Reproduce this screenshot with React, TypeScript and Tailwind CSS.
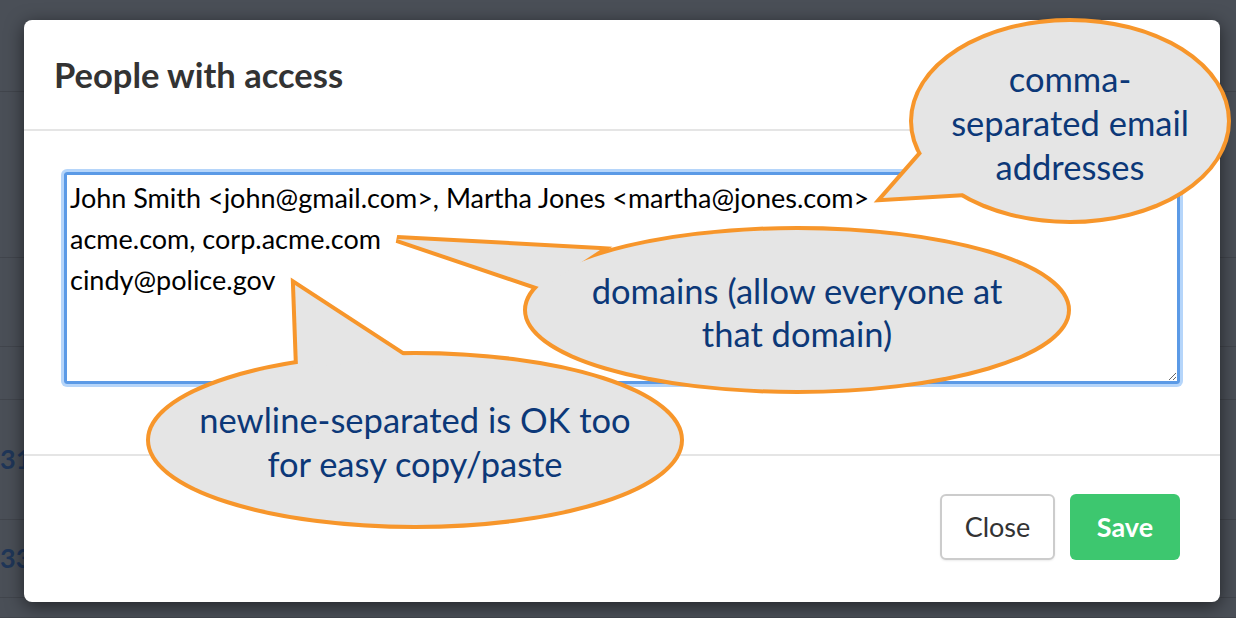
import React from 'react';

const FONT = { fontFamily: 'Lato, "Open Sans", sans-serif' };

const bgRows = [
  { h: 92, num: '' },
  { h: 166, num: '' },
  { h: 89, num: '' },
  { h: 53, num: '' },
  { h: 120, num: '31' },
  { h: 78, num: '33' },
  { h: 20, num: '' },
];

type Bubble = {
  cx: number;
  cy: number;
  rx: number;
  ry: number;
  tail: [number, number][];
  lines: string[];
  lineY: number[];
};

const bubbles: Bubble[] = [
  {
    cx: 1070,
    cy: 121,
    rx: 157,
    ry: 99,
    tail: [
      [925, 150],
      [883, 198],
      [966, 193],
    ],
    lines: ['comma-', 'separated email', 'addresses'],
    lineY: [78, 122, 166],
  },
  {
    cx: 797,
    cy: 310,
    rx: 270,
    ry: 80,
    tail: [
      [600, 250],
      [397, 239],
      [542, 288],
    ],
    lines: ['domains (allow everyone at', 'that domain)'],
    lineY: [290, 333],
  },
  {
    cx: 415,
    cy: 440,
    rx: 265,
    ry: 85,
    tail: [
      [298, 368],
      [295, 285],
      [410, 360],
    ],
    lines: ['newline-separated is OK too', 'for easy copy/paste'],
    lineY: [419, 463],
  },
];

function Callouts() {
  return (
    <svg
      className="pointer-events-none absolute left-0 top-0"
      width={1236}
      height={618}
      viewBox="0 0 1236 618"
    >
      {bubbles.map((b, i) => (
        <g key={i}>
          <ellipse cx={b.cx} cy={b.cy} rx={b.rx} ry={b.ry} fill="none" stroke="#f7962b" strokeWidth={8} />
          <polygon points={b.tail.map((p) => p.join(',')).join(' ')} fill="none" stroke="#f7962b" strokeWidth={8} strokeLinejoin="miter" />
          <ellipse cx={b.cx} cy={b.cy} rx={b.rx} ry={b.ry} fill="#e5e5e5" />
          <polygon points={b.tail.map((p) => p.join(',')).join(' ')} fill="#e5e5e5" />
          {b.lines.map((l, j) => (
            <text
              key={l}
              x={b.cx}
              y={b.lineY[j]}
              textAnchor="middle"
              dominantBaseline="central"
              fill="#0c3878"
              fontSize={34.5}
              style={FONT}
            >
              {l}
            </text>
          ))}
        </g>
      ))}
    </svg>
  );
}

export default function App() {
  return (
    <div className="relative h-[618px] w-[1236px] overflow-hidden bg-[#4a4f57]" style={FONT}>
      <div className="flex flex-col">
        {bgRows.map((r, i) => (
          <div
            key={i}
            className="flex items-center border-b border-[#41454c] px-0 text-[27px] font-bold text-[#1f3658]"
            style={{ height: r.h }}
          >
            {r.num}
          </div>
        ))}
      </div>

      <div className="absolute left-[24px] top-[20px] flex h-[582px] w-[1196px] flex-col rounded-[8px] bg-white shadow-[0_4px_18px_rgba(0,0,0,0.55)]">
        <div className="flex h-[111px] items-center border-b-2 border-[#e5e5e5] px-[30px]">
          <h2 className="text-[34.5px] font-bold text-[#333333]">People with access</h2>
        </div>

        <div className="px-[40px] pb-[70px] pt-[41px]">
          <textarea
            readOnly
            className="block h-[212px] w-full resize rounded-[3px] border-[3px] border-[#5b9ae6] px-[3px] py-[2px] text-[27px] leading-[41px] text-black shadow-[0_0_0_3px_rgba(120,178,245,0.55)] outline-none"
            style={FONT}
            value={'John Smith <john@gmail.com>, Martha Jones <martha@jones.com>\nacme.com, corp.acme.com\ncindy@police.gov'}
          />
        </div>

        <div className="flex flex-1 items-start justify-end gap-[15px] border-t-2 border-[#e5e5e5] px-[40px] pt-[38px]">
          <button className="h-[66px] w-[115px] rounded-[6px] border-2 border-[#cccccc] bg-white text-[27px] text-[#333333] shadow-[0_1px_2px_rgba(0,0,0,0.08)]">
            Close
          </button>
          <button className="h-[66px] w-[110px] rounded-[6px] bg-[#3dc76f] text-[27px] font-bold text-white">
            Save
          </button>
        </div>
      </div>

      <Callouts />
    </div>
  );
}
